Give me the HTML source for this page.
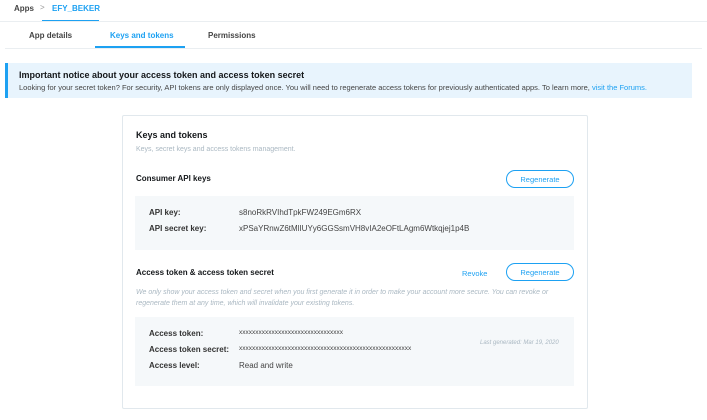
<!DOCTYPE html>
<html><head><style>
*{margin:0;padding:0;box-sizing:border-box}
body{width:707px;height:420px;background:#fff;font-family:"Liberation Sans",sans-serif;color:#14171a;position:relative;overflow:hidden}
.a{position:absolute;white-space:nowrap}
.b{font-weight:bold}
.btn{position:absolute;border:1px solid #1da1f2;border-radius:10px;color:#1da1f2;font-size:7.5px;display:flex;align-items:center;justify-content:center;width:68px;height:18px}
.gray{position:absolute;background:#f5f8fa}
.lbl{font-size:8px;font-weight:bold;color:#333}
.val{font-size:8px;color:#444}
</style></head><body>
<div class="a b" style="left:14px;top:4px;font-size:8px;color:#444">Apps</div>
<div class="a" style="left:40px;top:3px;font-size:8px;color:#999">&gt;</div>
<div class="a b" style="left:52px;top:4px;font-size:8px;color:#1da1f2">EFY_BEKER</div>
<div class="a" style="left:42px;top:20px;width:57px;height:1px;background:#1da1f2"></div>
<div class="a" style="left:0;top:21px;width:707px;height:1px;background:#eaeef1"></div>
<div class="a b" style="left:29px;top:31px;font-size:8px;color:#444">App details</div>
<div class="a b" style="left:110px;top:31px;font-size:8px;color:#1da1f2">Keys and tokens</div>
<div class="a b" style="left:208px;top:31px;font-size:8px;color:#444">Permissions</div>
<div class="a" style="left:95px;top:46px;width:90px;height:2px;background:#1da1f2"></div>
<div class="a" style="left:5px;top:48px;width:697px;height:1px;background:#eaeef1"></div>
<div class="a" style="left:5px;top:63px;width:687px;height:35px;background:#e8f4fd;border-left:3px solid #1da1f2"></div>
<div class="a b" style="left:19px;top:70px;font-size:9px">Important notice about your access token and access token secret</div>
<div class="a" style="left:19px;top:83px;font-size:7.5px;color:#444">Looking for your secret token? For security, API tokens are only displayed once. You will need to regenerate access tokens for previously authenticated apps. To learn more, <span style="color:#1da1f2">visit the Forums.</span></div>
<div class="a" style="left:122px;top:115px;width:466px;height:294px;border:1px solid #e1e8ed;border-radius:2px"></div>
<div class="a b" style="left:136px;top:130px;font-size:9px">Keys and tokens</div>
<div class="a" style="left:136px;top:146px;font-size:7px;color:#aab8c2">Keys, secret keys and access tokens management.</div>
<div class="a b" style="left:136px;top:174px;font-size:8px">Consumer API keys</div>
<div class="btn" style="left:506px;top:170px">Regenerate</div>
<div class="gray" style="left:135px;top:196px;width:439px;height:54px"></div>
<div class="a lbl" style="left:149px;top:208px">API key:</div>
<div class="a val" style="left:239px;top:208px">s8noRkRVIhdTpkFW249EGm6RX</div>
<div class="a lbl" style="left:149px;top:224px">API secret key:</div>
<div class="a val" style="left:239px;top:224px">xPSaYRnwZ6tMlIUYy6GGSsmVH8vIA2eOFtLAgm6Wtkqjej1p4B</div>
<div class="a b" style="left:136px;top:268px;font-size:8px">Access token &amp; access token secret</div>
<div class="a" style="left:462px;top:269px;font-size:7.5px;color:#1da1f2">Revoke</div>
<div class="btn" style="left:506px;top:263px">Regenerate</div>
<div class="a" style="left:136px;top:287px;font-size:7px;color:#aab8c2;font-style:italic;line-height:11px">We only show your access token and secret when you first generate it in order to make your account more secure. You can revoke or<br>regenerate them at any time, which will invalidate your existing tokens.</div>
<div class="gray" style="left:135px;top:317px;width:439px;height:69px"></div>
<div class="a lbl" style="left:149px;top:329px">Access token:</div>
<div class="a val" style="left:239px;top:329px;font-size:6.5px">xxxxxxxxxxxxxxxxxxxxxxxxxxxxxxxx</div>
<div class="a lbl" style="left:149px;top:345px">Access token secret:</div>
<div class="a val" style="left:239px;top:345px;font-size:6.5px">xxxxxxxxxxxxxxxxxxxxxxxxxxxxxxxxxxxxxxxxxxxxxxxxxxxxx</div>
<div class="a lbl" style="left:149px;top:361px">Access level:</div>
<div class="a val" style="left:239px;top:361px">Read and write</div>
<div class="a" style="left:480px;top:340px;font-size:6px;color:#aab8c2;font-style:italic">Last generated: Mar 19, 2020</div>
</body></html>
